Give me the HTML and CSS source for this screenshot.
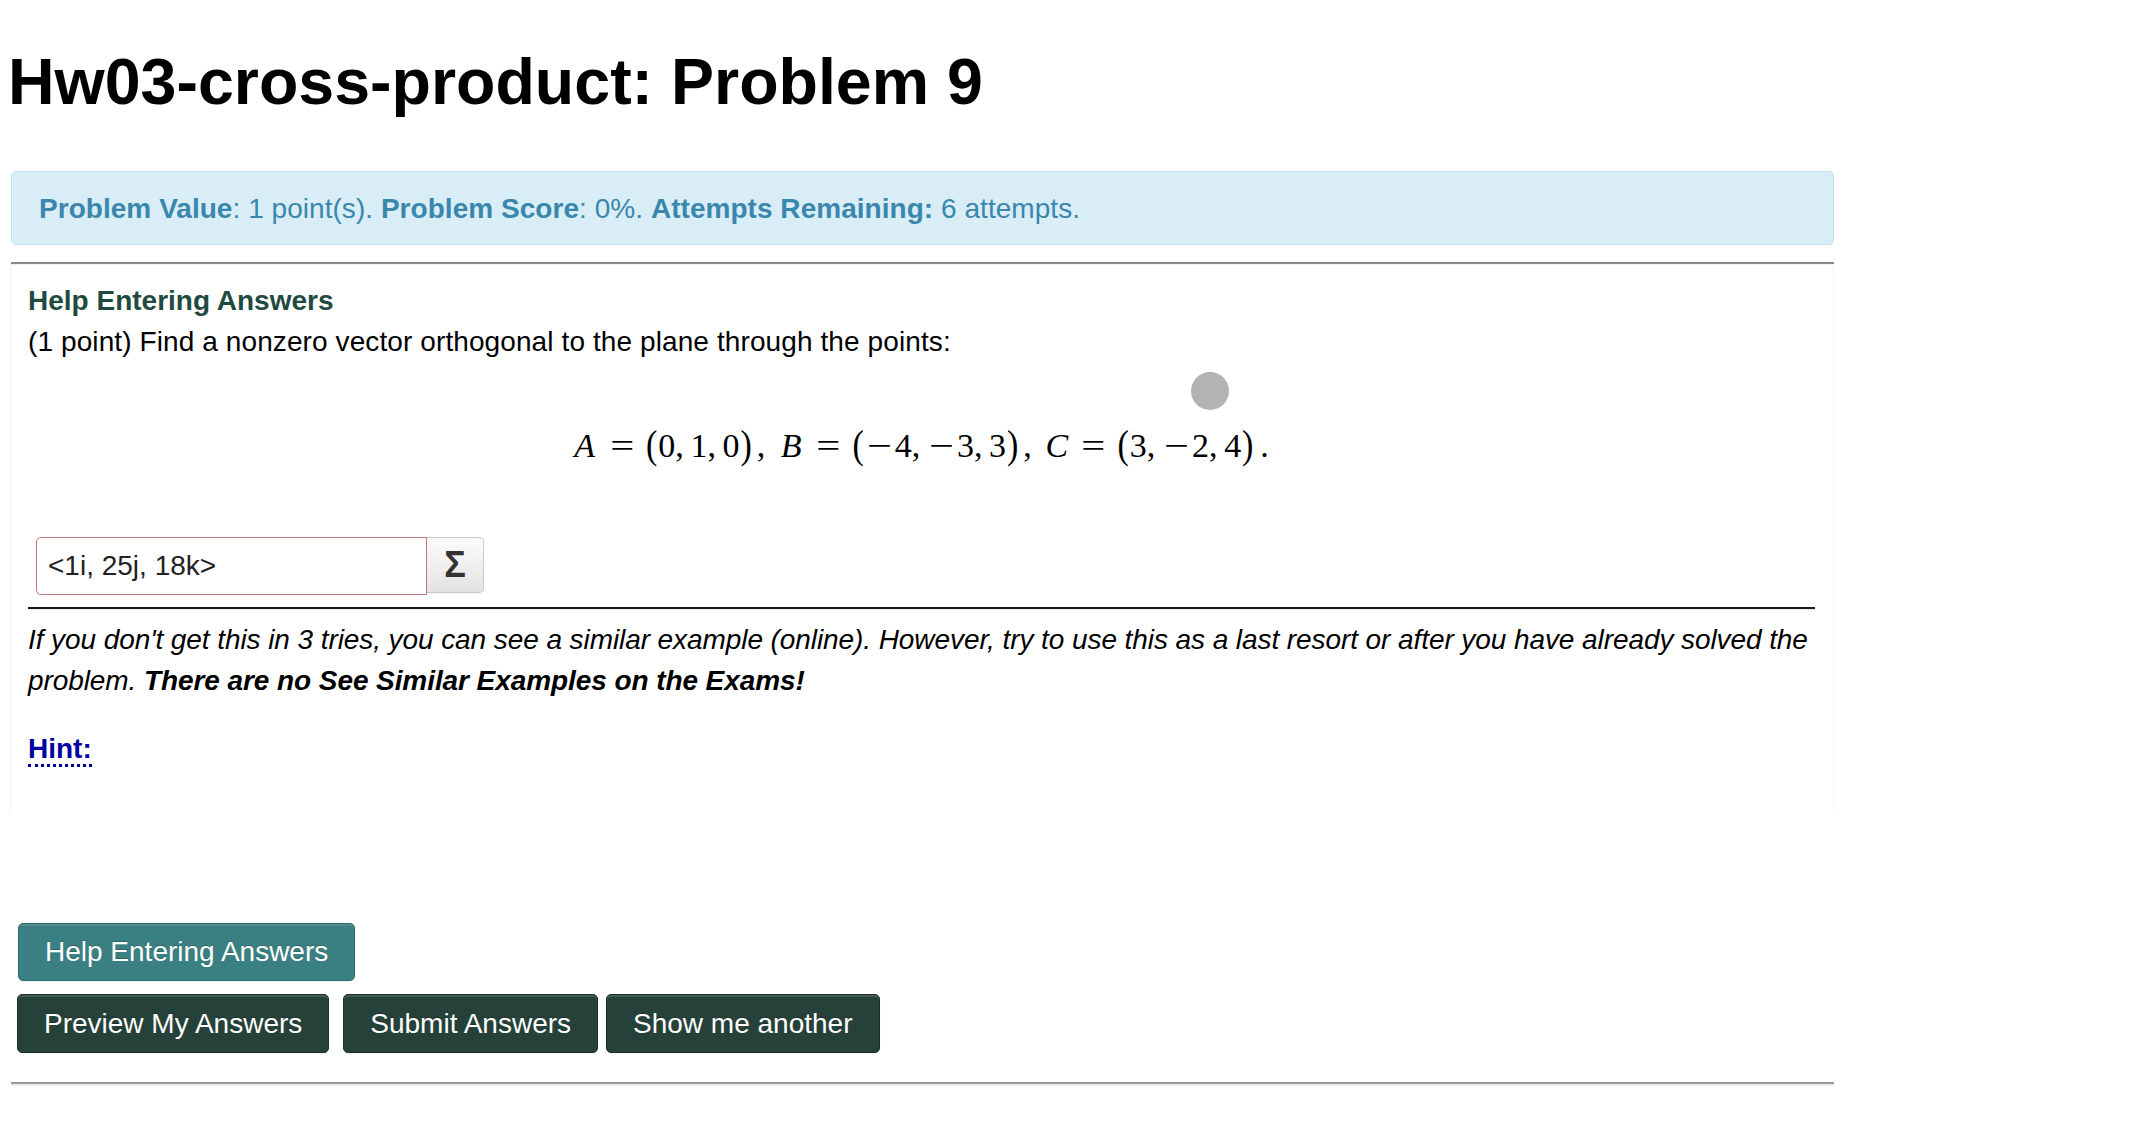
FILE: index.html
```html
<!DOCTYPE html>
<html lang="en">
<head>
<meta charset="utf-8">
<title>Hw03-cross-product: Problem 9</title>
<link rel="stylesheet" href="styles.css">
</head>
<body>
<div class="page">
  <h1 class="title">Hw03-cross-product: Problem 9</h1>

  <div class="alert">
    <b>Problem Value</b>: 1 point(s). <b>Problem Score</b>: 0%. <b>Attempts Remaining:</b> 6 attempts.
  </div>

  <hr class="sep">

  <div class="problem">
    <div class="help-head">Help Entering Answers</div>
    <div class="prob-text">(1 point) Find a nonzero vector orthogonal to the plane through the points:</div>

    <div class="math"><span class="g wA it">A</span><span class="g rel">=</span><span class="g par">(</span><span class="g dig">0</span><span class="g com">,</span><span class="g dig">1</span><span class="g com">,</span><span class="g dig">0</span><span class="g par">)</span><span class="g com sep-com">,</span><span class="g wB it">B</span><span class="g rel">=</span><span class="g par">(</span><span class="g min">−</span><span class="g dig">4</span><span class="g com">,</span><span class="g min">−</span><span class="g dig">3</span><span class="g com">,</span><span class="g dig">3</span><span class="g par">)</span><span class="g com sep-com">,</span><span class="g wC it">C</span><span class="g rel">=</span><span class="g par">(</span><span class="g dig">3</span><span class="g com">,</span><span class="g min">−</span><span class="g dig">2</span><span class="g com">,</span><span class="g dig">4</span><span class="g par">)</span><span class="g dot">.</span></div>

    <div class="answer-row">
      <input class="answer" type="text" value="&lt;1i, 25j, 18k&gt;" aria-label="answer">
      <span class="sigma">Σ</span>
    </div>

    <hr class="dark-rule">

    <p class="note">If you don't get this in 3 tries, you can see a similar example (online). However, try to use this as a last resort or after you have already solved the problem. <b>There are no See Similar Examples on the Exams!</b></p>

    <div class="hint"><span class="hint-link">Hint:</span></div>
  </div>

  <div class="buttons">
    <div class="btn-row">
      <button class="btn btn-teal" type="button">Help Entering Answers</button>
    </div>
    <div class="btn-row second">
      <button class="btn btn-dark preview" type="button">Preview My Answers</button>
      <button class="btn btn-dark submit" type="button">Submit Answers</button>
      <button class="btn btn-dark" type="button">Show me another</button>
    </div>
  </div>

  <hr class="sep bottom">

  <div class="touch-dot"></div>
</div>
</body>
</html>
```

FILE: styles.css
```css
html, body {
  margin: 0;
  padding: 0;
  background: #ffffff;
}

body {
  font-family: "Liberation Sans", Arial, Helvetica, sans-serif;
  font-size: 28px;
  line-height: 41px;
  color: #000;
}

.page {
  position: relative;
  margin-left: 11px;
  width: 1823px;
  padding-top: 45px;
  padding-bottom: 40px;
}

.title {
  margin: 0 0 0 -3px;
  font-size: 64.5px;
  line-height: 74px;
  font-weight: bold;
  color: #000;
}

.alert {
  margin-top: 52px;
  padding: 16px 27px 15px;
  background: #d9edf7;
  border: 1px solid #bce3f0;
  border-radius: 5px;
  color: #3a87ad;
  letter-spacing: 0.04px;
}

.alert b {
  font-weight: bold;
}

.sep {
  margin: 17px 0 0;
  height: 0;
  border: 0;
  border-top: 2px solid #8a8a8a;
  border-bottom: 1px solid #efefef;
}

.problem {
  margin-left: -1px;
  padding: 15px 18px 44px 17px;
  border-left: 1px solid #f4f4f4;
  border-right: 1px solid #f7f7f7;
}

.help-head {
  font-weight: bold;
  color: #1f4a3f;
}

.prob-text {
  letter-spacing: 0.1px;
}

.math {
  margin-top: 60px;
  padding-left: 544px;
  font-family: "Liberation Serif", "DejaVu Serif", "Times New Roman", serif;
  font-size: 34px;
  line-height: 48px;
  white-space: nowrap;
}

.g {
  display: inline-block;
  text-align: center;
}

.it { font-style: italic; }
.wA { width: 25.5px; }
.wB { width: 25.8px; }
.wC { width: 24.3px; }

.rel {
  width: 26.5px;
  margin: 0 10px 0 11px;
  transform: scaleX(1.25);
}

.par {
  width: 13.2px;
  transform: scaleY(1.17);
  transform-origin: 50% 58%;
}

.dig { width: 17px; }

.com {
  width: 9.5px;
  margin-right: 5.7px;
  text-align: left;
}

.sep-com {
  margin-left: 4px;
  margin-right: 12px;
}

.min {
  width: 30px;
  transform: scaleX(1.3);
  transform-origin: 60% 50%;
}

.dot {
  width: 9.5px;
  margin-left: 6px;
  text-align: left;
}

.answer-row {
  display: flex;
  align-items: flex-start;
  margin: 67px 0 0 8px;
}

.answer {
  box-sizing: border-box;
  width: 391px;
  height: 58px;
  margin: 0;
  padding: 0 11px;
  border: 1px solid #c77676;
  border-radius: 5px 0 0 5px;
  font-family: "Liberation Sans", Arial, sans-serif;
  font-size: 28px;
  color: #222;
  background: #fff;
  outline: none;
}

.sigma {
  box-sizing: border-box;
  width: 57px;
  height: 56px;
  display: flex;
  align-items: center;
  justify-content: center;
  border: 1px solid #c9c9c9;
  border-left: 0;
  border-radius: 0 5px 5px 0;
  background: linear-gradient(#fcfcfc, #e3e3e3);
  box-shadow: 0 1px 1px rgba(0, 0, 0, 0.06);
  font-size: 36px;
  font-weight: bold;
  color: #333;
  line-height: 1;
}

.dark-rule {
  margin: 12px 0 0;
  height: 0;
  border: 0;
  border-top: 2px solid #1a1a1a;
  border-bottom: 1px solid #e9e9e9;
}

.note {
  margin: 9px 0 0;
  font-style: italic;
  letter-spacing: -0.08px;
}

.note b {
  font-weight: bold;
}

.hint {
  margin-top: 27px;
}

.hint-link {
  font-weight: bold;
  color: #0000a0;
  border-bottom: 3px dotted #0000a0;
}

.buttons {
  margin-top: 110px;
}

.btn-row {
  display: flex;
  margin-left: 7px;
}

.btn-row.second {
  margin-top: 13px;
  margin-left: 6px;
}

.btn {
  box-sizing: border-box;
  height: 58px;
  margin: 0;
  padding: 0 26px;
  border: 1px solid;
  border-radius: 5px;
  font-family: "Liberation Sans", Arial, sans-serif;
  font-size: 28px;
  line-height: 56px;
  color: #fff;
  text-shadow: 0 -1px 0 rgba(0, 0, 0, 0.2);
  cursor: pointer;
}

.btn-teal {
  background: #3a7f81;
  border-color: #2d6b6d;
  box-shadow: inset 0 2px 0 rgba(255, 255, 255, 0.12), 0 1px 2px rgba(0, 0, 0, 0.06);
}

.btn-dark {
  height: 59px;
  background: #254139;
  border-color: #1b3029;
  box-shadow: inset 0 2px 0 rgba(255, 255, 255, 0.14), 0 1px 2px rgba(0, 0, 0, 0.06);
}

.preview {
  margin-right: 14px;
}

.submit {
  margin-right: 8px;
}

.sep.bottom {
  margin-top: 29px;
  border-top-color: #989898;
  border-bottom: 2px solid #ececec;
}

.touch-dot {
  position: absolute;
  left: 1180px;
  top: 372px;
  width: 38px;
  height: 38px;
  border-radius: 50%;
  background: #b3b3b3;
}
```
